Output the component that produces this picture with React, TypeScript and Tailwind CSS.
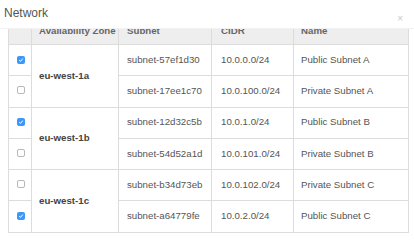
import React from "react";

type Row = { checked: boolean; subnet: string; cidr: string; name: string };
const groups: { az: string; rows: Row[] }[] = [
  { az: "eu-west-1a", rows: [
    { checked: true, subnet: "subnet-57ef1d30", cidr: "10.0.0.0/24", name: "Public Subnet A" },
    { checked: false, subnet: "subnet-17ee1c70", cidr: "10.0.100.0/24", name: "Private Subnet A" },
  ]},
  { az: "eu-west-1b", rows: [
    { checked: true, subnet: "subnet-12d32c5b", cidr: "10.0.1.0/24", name: "Public Subnet B" },
    { checked: false, subnet: "subnet-54d52a1d", cidr: "10.0.101.0/24", name: "Private Subnet B" },
  ]},
  { az: "eu-west-1c", rows: [
    { checked: false, subnet: "subnet-b34d73eb", cidr: "10.0.102.0/24", name: "Private Subnet C" },
    { checked: true, subnet: "subnet-a64779fe", cidr: "10.0.2.0/24", name: "Public Subnet C" },
  ]},
];

function Check({ checked }: { checked: boolean }) {
  return checked ? (
    <span className="inline-flex w-[8px] h-[8px] rounded-[2px] bg-[#3d97f7] items-center justify-center">
      <svg width="6" height="6" viewBox="0 0 6 6"><path d="M1.2 3.2 L2.5 4.4 L4.8 1.6" stroke="white" strokeWidth="1" fill="none" /></svg>
    </span>
  ) : (
    <span className="inline-block w-[8px] h-[8px] rounded-[2px] bg-white border border-[#b8b8b8]" />
  );
}

export default function App() {
  return (
    <div className="w-[414px] h-[246px] bg-white relative overflow-hidden" style={{ fontFamily: '"Liberation Sans", Arial, sans-serif' }}>
      <div className="h-[28px] pl-[4px] pt-[7px] text-[12px] leading-[12px] text-[#555]">Network</div>
      <span className="absolute right-[11px] top-[14px] text-[10px] leading-[10px] text-[#c8c8c8]">×</span>
      <div className="border-t border-[#f2f2f2] h-[218px] overflow-hidden">
        <table className="ml-[8px] mt-[-8px] border-collapse table-fixed text-[9.7px] text-[#555]" style={{ width: 400 }}>
          <colgroup>
            <col style={{ width: 23 }} />
            <col style={{ width: 87 }} />
            <col style={{ width: 93 }} />
            <col style={{ width: 82 }} />
            <col style={{ width: 115 }} />
          </colgroup>
          <thead>
            <tr className="h-[23px] bg-[#eeeeee]">
              <th className="border border-[#dcdcdc] pb-[4px]"></th>
              <th className="border border-[#dcdcdc] text-left font-bold pl-[7px] pb-[4px] text-[#666]">Availability Zone</th>
              <th className="border border-[#dcdcdc] text-left font-bold pl-[8px] pb-[4px] text-[#666]">Subnet</th>
              <th className="border border-[#dcdcdc] text-left font-bold pl-[9px] pb-[4px] text-[#666]">CIDR</th>
              <th className="border border-[#dcdcdc] text-left font-bold pl-[7px] pb-[4px] text-[#666]">Name</th>
            </tr>
          </thead>
          <tbody>
            {groups.map((g) =>
              g.rows.map((r, i) => (
                <tr key={r.subnet} className="h-[31.3px]">
                  <td className="border border-[#dcdcdc] text-center align-middle"><span className="inline-flex ml-[1px] mt-[2px]"><Check checked={r.checked} /></span></td>
                  {i === 0 && (
                    <td rowSpan={2} className="border border-[#dcdcdc] pl-[7px] font-bold text-[#444] align-middle">{g.az}</td>
                  )}
                  <td className="border border-[#dcdcdc] pl-[8px]">{r.subnet}</td>
                  <td className="border border-[#dcdcdc] pl-[9px]">{r.cidr}</td>
                  <td className="border border-[#dcdcdc] pl-[7px]">{r.name}</td>
                </tr>
              ))
            )}
          </tbody>
        </table>
      </div>
    </div>
  );
}
